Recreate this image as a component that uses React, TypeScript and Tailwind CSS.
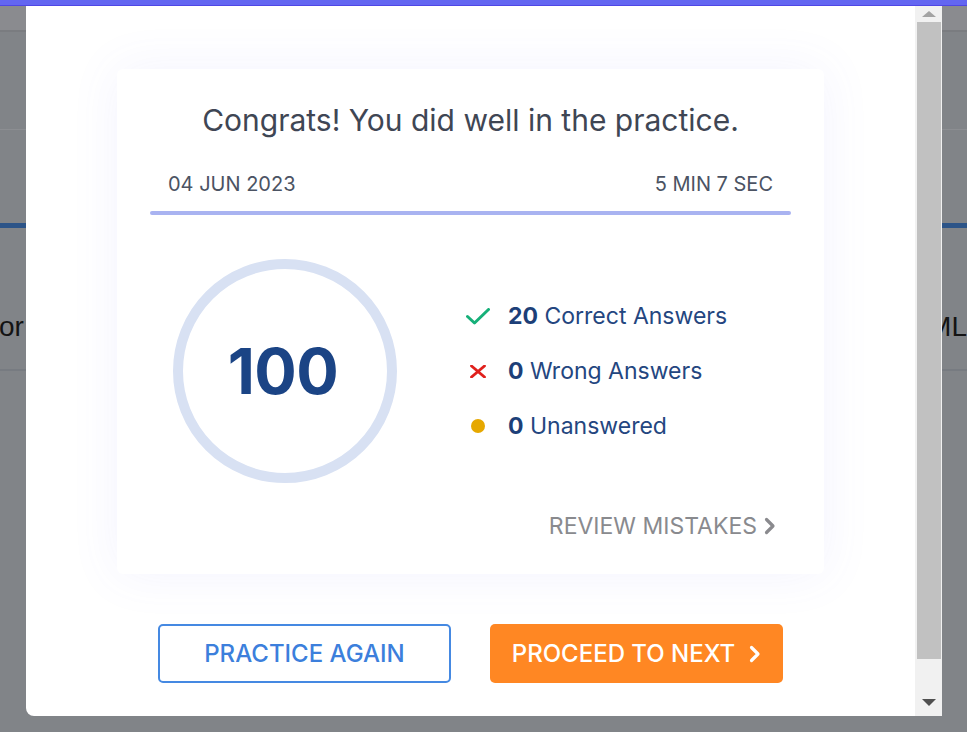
import React from "react";

function Check() {
  return (
    <svg width="24" height="17" viewBox="0 0 24 17" fill="none">
      <path d="M1.5 8.5 L8.5 15 L22.5 1.5" stroke="#16b079" strokeWidth="3" strokeLinecap="round" strokeLinejoin="round" />
    </svg>
  );
}

function Cross() {
  return (
    <svg width="16" height="13" viewBox="0 0 16 13" fill="none">
      <path d="M1.5 1 L14.5 12 M14.5 1 L1.5 12" stroke="#e0201c" strokeWidth="2.8" strokeLinecap="round" />
    </svg>
  );
}

function Chevron({ color, w = 12, h = 18 }: { color: string; w?: number; h?: number }) {
  return (
    <svg width={w} height={h} viewBox="0 0 12 18" fill="none">
      <path d="M2.5 2.5 L9 9 L2.5 15.5" stroke={color} strokeWidth="3.2" strokeLinecap="round" strokeLinejoin="round" />
    </svg>
  );
}

export default function App() {
  return (
    <div className="relative w-[967px] h-[732px] overflow-hidden bg-[#818488]" style={{ fontFamily: "Inter, 'Noto Sans', sans-serif" }}>
      {/* backdrop page */}
      <div className="h-[6px] bg-[#6366f1] border-b border-[#4f46e5]" />
      <div className="h-[24px] bg-[#8a8b8f]" />
      <div className="h-[2px] bg-[#7a7c80]" />
      <div className="h-[97px]" />
      <div className="h-[1px] bg-[#8c8e92]" />
      <div className="h-[93px]" />
      <div className="h-[5px] bg-[#2c5488]" />
      <div className="h-[141px] flex items-end justify-between pb-[28px] text-[28px] leading-none text-[#141414]" style={{ fontFamily: "'Liberation Sans', Arial, sans-serif" }}>
        <span className="-ml-[1px]">or</span>
        <span className="mr-[0px]">ML</span>
      </div>
      <div className="h-[2px] bg-[#777b81]" />

      {/* modal */}
      <div className="absolute left-[26px] top-[6px] w-[916px] h-[710px] bg-white rounded-bl-lg flex overflow-hidden">
        <div className="flex-1 flex flex-col items-center pt-[63px]">
          <div className="w-[707px] h-[505px] bg-white rounded-md shadow-[0_0_50px_rgba(99,102,241,0.08)] flex flex-col">
            <h1 className="pt-[33px] text-center text-[30px] leading-[36px] text-[#3f4654] font-normal">
              Congrats! You did well in the practice.
            </h1>
            <div className="mx-[33px] mt-[32px]">
              <div className="px-[18px] flex justify-between text-[20px] leading-[28px] text-[#4b5363]">
                <span>04 JUN 2023</span>
                <span>5 MIN 7 SEC</span>
              </div>
              <div className="mt-[13px] h-[4px] rounded-full bg-[#a9b3f1]" />
            </div>
            <div className="mt-[44px] ml-[56px] flex items-center gap-[69px]">
              <div className="w-[224px] h-[224px] rounded-full border-[10px] border-[#d8e1f3] flex items-center justify-center">
                <span className="text-[63px] font-bold text-[#1b4485] leading-none tracking-[-0.5px] -ml-[4px]">100</span>
              </div>
              <div className="flex flex-col gap-[23px] text-[23px] text-[#24467f]">
                <div className="h-8 flex items-center">
                  <div className="w-[24px] flex justify-center"><Check /></div>
                  <span className="ml-[18px]"><b className="font-bold text-[#1d3f78]">20</b> Correct Answers</span>
                </div>
                <div className="h-8 flex items-center">
                  <div className="w-[24px] flex justify-center"><Cross /></div>
                  <span className="ml-[18px]"><b className="font-bold text-[#1d3f78]">0</b> Wrong Answers</span>
                </div>
                <div className="h-8 flex items-center">
                  <div className="w-[24px] flex justify-center"><div className="w-[14px] h-[14px] rounded-full bg-[#e6a800]" /></div>
                  <span className="ml-[18px]"><b className="font-bold text-[#1d3f78]">0</b> Unanswered</span>
                </div>
              </div>
            </div>
            <div className="mt-[29px] pr-[48px] flex justify-end">
              <span className="flex items-center gap-[7px] text-[23px] leading-[28px] text-[#898a8e]">
                REVIEW MISTAKES <Chevron color="#8a8a8e" />
              </span>
            </div>
          </div>
          <div className="mt-[50px] flex gap-[39px]">
            <button className="w-[293px] h-[59px] rounded-[5px] border-2 border-[#4589e2] text-[#3c7fdc] text-[24px] font-medium bg-white">
              PRACTICE AGAIN
            </button>
            <button className="w-[293px] h-[59px] rounded-[5px] bg-[#ff8723] text-white text-[24px] font-medium flex items-center justify-center gap-[14px]">
              PROCEED TO NEXT <Chevron color="#ffffff" />
            </button>
          </div>
        </div>
        {/* scrollbar */}
        <div className="w-[27px] h-full bg-[#f1f1f1] flex flex-col items-center">
          <div className="h-[16px] w-full flex items-center justify-center">
            <div className="w-0 h-0 border-l-[7px] border-r-[7px] border-b-[6px] border-l-transparent border-r-transparent border-b-[#a3a3a3]" />
          </div>
          <div className="ml-[1px] mr-[1px] w-[24px] h-[637px] bg-[#c1c1c1]" />
          <div className="flex-1 w-full flex items-end justify-center pb-[10px]">
            <div className="w-0 h-0 border-l-[7px] border-r-[7px] border-t-[7px] border-l-transparent border-r-transparent border-t-[#505050]" />
          </div>
        </div>
      </div>
    </div>
  );
}
